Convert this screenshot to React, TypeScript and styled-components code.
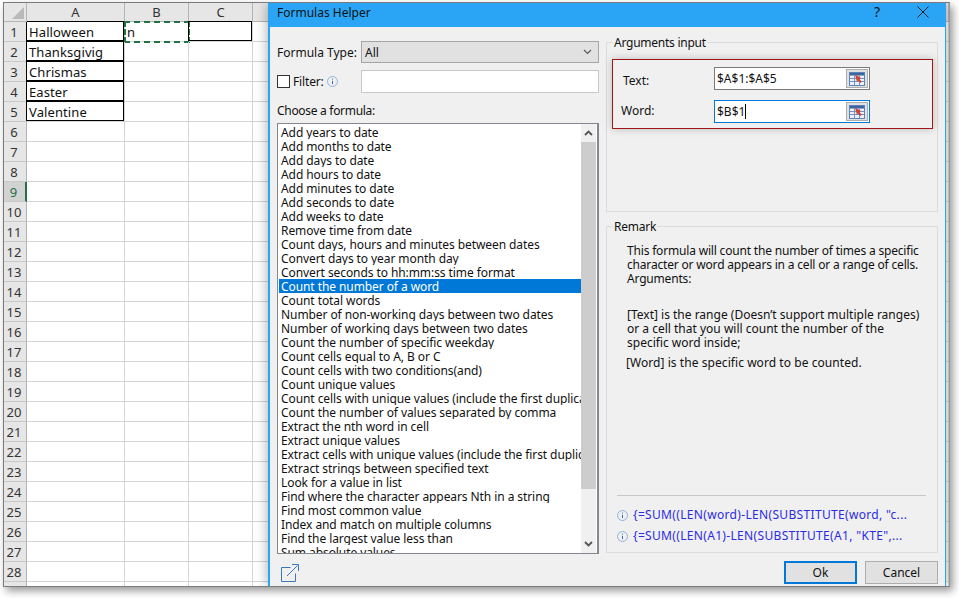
import React from "react";
import styled, { createGlobalStyle } from "styled-components";

const Global = createGlobalStyle`
  html, body { margin: 0; padding: 0; background: #fff; overflow: hidden; }
  * { box-sizing: border-box; }
`;
const FONT = `"Noto Sans", "DejaVu Sans", sans-serif`;

const Page = styled.div`
  width: 959px; height: 598px; padding: 2px 0 0 3px;
  font-family: ${FONT}; font-size: 12px; color: #111;
`;
const Window = styled.div`
  position: relative; width: 947px; height: 585px; background: #fff; overflow: hidden;
  border: 1px solid #7b7b7b; border-right-color: #9a9a9a;
  box-shadow: 3px 4px 8px rgba(0,0,0,.4);
`;
const Sheet = styled.div`
  display: grid; grid-template-columns: 23px 98px 64px 64px 1fr; grid-template-rows: 19px; grid-auto-rows: 20px;
  height: 100%; overflow: hidden;
`;
const Corner = styled.div`
  position: relative; background: #e6e6e6; border-right: 1px solid #b4b4b4; border-bottom: 1px solid #b4b4b4;
  &::after { content: ""; position: absolute; right: 2px; bottom: 2px; border-style: solid; border-width: 0 0 12px 12px; border-color: transparent transparent #b9b9b9 transparent; }
`;
const ColHead = styled.div`
  background: #e6e6e6; border-right: 1px solid #b4b4b4; border-bottom: 1px solid #b4b4b4;
  font-size: 13px; color: #333; text-align: center; line-height: 18px;
`;
const RowHead = styled.div<{ $active?: boolean }>`
  background: ${p => p.$active ? "#d2d2d2" : "#e6e6e6"};
  color: ${p => p.$active ? "#217346" : "#333"};
  border-right: ${p => p.$active ? "2px solid #217346" : "1px solid #b4b4b4"};
  border-bottom: 1px solid #c8c8c8;
  font-size: 13px; text-align: center; line-height: 21px; padding-right: 2px;
`;
const Cell = styled.div<{ $boxed?: boolean; $ants?: boolean }>`
  border-right: 1px solid #d4d4d4; border-bottom: 1px solid #d4d4d4;
  font-size: 13px; letter-spacing: .1px; line-height: 20px; padding-left: 2px; color: #111; white-space: nowrap;
  ${p => p.$boxed ? "box-shadow: -1px -1px 0 #000, inset -1px -1px 0 #000;" : ""}
  ${p => p.$ants ? "outline: 2px dashed #217346; outline-offset: -1px;" : ""}
`;

const Dialog = styled.div`
  position: absolute; left: 264px; top: 0; width: 678px; bottom: 0; background: #f0f0f0;
  border-left: 2px solid #2aa5f5; border-right: 1px solid #2aa5f5; display: flex; flex-direction: column;
  box-shadow: 0 0 12px rgba(0,0,0,.35);
`;
const TitleBar = styled.div`
  flex: none; height: 24px; background: #2aa5f5; display: flex; align-items: center; padding: 0 0 6px 9px; margin: 0 -1px 0 -2px;
  font-size: 12px; color: #111;
`;
const TitleText = styled.span`flex: 1;`;
const TitleButton = styled.span<{ $w: number }>`
  width: ${p => p.$w}px; display: flex; justify-content: center; font-size: 14px; line-height: 16px;
`;
const Body = styled.div`
  flex: 1; display: flex; gap: 7px; padding: 14px 0 0 7px; min-height: 0;
`;
const LeftPane = styled.div`width: 322px; display: flex; flex-direction: column;`;
const RightPane = styled.div`width: 332px; display: flex; flex-direction: column; padding-top: 1px;`;
const FormRow = styled.div`
  display: grid; grid-template-columns: 84px 238px; align-items: center; margin-bottom: 7px;
`;
const Select = styled.div`
  height: 22px; background: #e1e1e1; border: 1px solid #a6a6a6; display: flex; align-items: center;
  justify-content: space-between; padding: 0 6px 0 3px;
`;
const FilterLabel = styled.label`display: flex; align-items: center; gap: 3px; letter-spacing: -.15px;`;
const Check = styled.span`width: 13px; height: 13px; border: 1px solid #333; background: #fff; display: block;`;
const FilterInput = styled.div`height: 23px; background: #fff; border: 1px solid #c8c8c8;`;
const ChooseLabel = styled.div`line-height: 16px; margin: 3px 0 4px; letter-spacing: -.3px;`;
const List = styled.div`
  height: 431px; background: #fff; border: 1px solid #828790; border-right-width: 2px; padding: 1px 0 0 1px; display: flex; overflow: hidden;
`;
const Items = styled.div`flex: 1; min-width: 0; overflow: hidden;`;
const Item = styled.div<{ $selected?: boolean }>`
  height: 14px; line-height: 16px; padding-left: 2px; white-space: nowrap; overflow: hidden; letter-spacing: -.08px;
  background: ${p => p.$selected ? "#0078d7" : "transparent"};
  color: ${p => p.$selected ? "#fff" : "#111"};
`;
const ScrollTrack = styled.div`width: 15px; margin: -1px 1px 0 0; background: #f0f0f0; display: flex; flex-direction: column; justify-content: space-between; align-items: stretch;`;
const ScrollBtn = styled.div`height: 18px; display: flex; align-items: center; justify-content: center; flex: none;`;
const Thumb = styled.div`height: 347px; background: #cdcdcd; flex: none;`;
const Spacer = styled.div`flex: 1;`;
const ShareButton = styled.div`margin: 10px 0 0 4px; height: 18px;`;

const Group = styled.div<{ $h: number }>`
  height: ${p => p.$h}px; border: 1px solid #dcdcdc; padding: 0 5px; display: flex; flex-direction: column;
`;
const Legend = styled.div`
  flex: none; width: fit-content; margin: -8px 0 0 1px; padding: 0 1px; background: #f0f0f0; line-height: 15px; letter-spacing: -.25px;
`;
const RedBox = styled.div`
  margin-top: 9px; height: 70px; border: 1px solid #a31515; margin-left: 0; width: 321px; padding: 7px 0 0 0;
  box-shadow: 0 0 8px rgba(0,0,0,.22); display: flex; flex-direction: column; gap: 10px;
`;
const ArgRow = styled.div`display: grid; grid-template-columns: 101px 156px; align-items: center;`;
const ArgLabel = styled.span<{ $x: number; $down?: number; $up?: number }>`
  padding-left: ${p => p.$x}px; margin-top: ${p => p.$down || 0}px; margin-bottom: ${p => p.$up || 0}px;
`;
const ArgInput = styled.div<{ $focus?: boolean }>`
  height: 23px; background: #fff; border: 1px solid ${p => p.$focus ? "#0078d7" : "#7a7a7a"};
  display: flex; align-items: center; justify-content: space-between; padding: 0 1px 0 2px;
`;
const Caret = styled.span`display: inline-block; width: 1px; height: 15px; background: #000; vertical-align: -3px;`;
const RangeBtn = styled.span`
  width: 22px; height: 19px; background: #e1e1e1; border: 1px solid #adadad; display: flex; align-items: center; justify-content: center;
`;
const RemarkGroup = styled(Group)`margin-top: 14px;`;
const RemarkText = styled.div`padding: 9px 0 0 15px; line-height: 14px; flex: 1;`;
const Para = styled.p<{ $mt: number; $ml?: number; $ls: number }>`
  margin: ${p => p.$mt}px 0 0 ${p => p.$ml || 0}px; white-space: nowrap; letter-spacing: ${p => p.$ls}px;
`;
const Divider = styled.div`height: 1px; background: #c8c8c8; margin: 0 6px 0 5px;`;
const Links = styled.div`padding: 12px 0 9px 5px; display: flex; flex-direction: column; gap: 7px;`;
const LinkRow = styled.div`display: flex; align-items: center; gap: 5px; color: #2b2be6; line-height: 14px; white-space: nowrap; letter-spacing: .33px;`;
const Footer = styled.div`display: flex; justify-content: flex-end; gap: 8px; margin-top: 8px; padding-right: 0;`;
const Button = styled.div<{ $primary?: boolean }>`
  width: 73px; height: 23px; background: #e1e1e1; text-align: center;
  border: ${p => p.$primary ? "2px solid #0078d7" : "1px solid #adadad"};
  line-height: ${p => p.$primary ? 19 : 21}px;
`;

const Info = () => (
  <svg width="11" height="11" viewBox="0 0 11 11" fill="none">
    <circle cx="5.5" cy="5.5" r="5" stroke="#8fb2dd" />
    <path d="M5.5 2.6v1M5.5 4.8v3.4" stroke="#3f6fae" />
  </svg>
);
const Chevron = ({ up, weight = 1.8 }: { up?: boolean; weight?: number }) => (
  <svg width="9" height="6" viewBox="0 0 9 6" fill="none">
    <path d={up ? "M1 5l3.5-3.5L8 5" : "M1 1l3.5 3.5L8 1"} stroke="#555" strokeWidth={weight} />
  </svg>
);
const RangeIcon = () => (
  <svg width="16" height="14" viewBox="0 0 16 14">
    <rect x="0.5" y="0.5" width="15" height="13" fill="#eaf1fa" stroke="#5c83b8" />
    <rect x="1" y="1" width="14" height="2.5" fill="#3c64a0" />
    <path d="M1 6.5h14M1 9.5h14M5.5 3.5v10M10.5 3.5v10" stroke="#6f93c4" />
    <path d="M6 2.5l6 3.5-1.6 1.2 2.4 2.2-1.4 1.5-2.4-2.3L8 10z" fill="#d8402a" />
  </svg>
);
const ShareIcon = () => (
  <svg width="18" height="18" viewBox="0 0 18 18" fill="none" stroke="#3a78bd">
    <path d="M9.5 3.5h-9v14h14v-8" />
    <path d="M6 12L16.5 1.5M11 .5h6.5V7" />
  </svg>
);
const CloseIcon = () => (
  <svg width="12" height="12" viewBox="0 0 12 12" fill="none" stroke="#222"><path d="M.5.5l11 11M11.5.5l-11 11" /></svg>
);

const names = ["Halloween", "Thanksgivig", "Chrismas", "Easter", "Valentine"];
const rows = Array.from({ length: 29 }, (_, i) => i + 1);
const formulas = [
  "Add years to date", "Add months to date", "Add days to date", "Add hours to date", "Add minutes to date",
  "Add seconds to date", "Add weeks to date", "Remove time from date", "Count days, hours and minutes between dates",
  "Convert days to year month day", "Convert seconds to hh:mm:ss time format", "Count the number of a word",
  "Count total words", "Number of non-working days between two dates", "Number of working days between two dates",
  "Count the number of specific weekday", "Count cells equal to A, B or C", "Count cells with two conditions(and)",
  "Count unique values", "Count cells with unique values (include the first duplica",
  "Count the number of values separated by comma", "Extract the nth word in cell", "Extract unique values",
  "Extract cells with unique values (include the first duplic", "Extract strings between specified text",
  "Look for a value in list", "Find where the character appears Nth in a string", "Find most common value",
  "Index and match on multiple columns", "Find the largest value less than", "Sum absolute values",
];

export default function App() {
  return (
    <Page>
      <Global />
      <Window>
        <Sheet>
          <Corner />
          <ColHead>A</ColHead><ColHead>B</ColHead><ColHead>C</ColHead><ColHead />
          {rows.map(r => (
            <React.Fragment key={r}>
              <RowHead $active={r === 9}>{r}</RowHead>
              <Cell $boxed={r <= 5}>{names[r - 1]}</Cell>
              <Cell $ants={r === 1}>{r === 1 ? "n" : ""}</Cell>
              <Cell $boxed={r === 1} />
              <Cell />
            </React.Fragment>
          ))}
        </Sheet>
        <Dialog>
          <TitleBar>
            <TitleText>Formulas Helper</TitleText>
            <TitleButton $w={46}>?</TitleButton>
            <TitleButton $w={46}><CloseIcon /></TitleButton>
          </TitleBar>
          <Body>
            <LeftPane>
              <FormRow>
                <span>Formula Type:</span>
                <Select><span>All</span><Chevron weight={1.1} /></Select>
              </FormRow>
              <FormRow>
                <FilterLabel><Check />Filter:<Info /></FilterLabel>
                <FilterInput />
              </FormRow>
              <ChooseLabel>Choose a formula:</ChooseLabel>
              <List>
                <Items>
                  {formulas.map((f, i) => <Item key={f} $selected={i === 11}>{f}</Item>)}
                </Items>
                <ScrollTrack>
                  <ScrollBtn><Chevron up /></ScrollBtn>
                  <Thumb />
                  <Spacer />
                  <ScrollBtn><Chevron /></ScrollBtn>
                </ScrollTrack>
              </List>
              <ShareButton><ShareIcon /></ShareButton>
            </LeftPane>
            <RightPane>
              <Group $h={170}>
                <Legend>Arguments input</Legend>
                <RedBox>
                  <ArgRow>
                    <ArgLabel $x={10} $down={4}>Text:</ArgLabel>
                    <ArgInput><span>$A$1:$A$5</span><RangeBtn><RangeIcon /></RangeBtn></ArgInput>
                  </ArgRow>
                  <ArgRow>
                    <ArgLabel $x={8} $up={2}>Word:</ArgLabel>
                    <ArgInput $focus><span>$B$1<Caret /></span><RangeBtn><RangeIcon /></RangeBtn></ArgInput>
                  </ArgRow>
                </RedBox>
              </Group>
              <RemarkGroup $h={327}>
                <Legend>Remark</Legend>
                <RemarkText>
                  <Para $mt={1} $ls={-0.18}>This formula will count the number of times a specific<br />character or word appears in a cell or a range of cells.<br />Arguments:</Para>
                  <Para $mt={22} $ls={0}>[Text] is the range (Doesn’t support multiple ranges)<br />or a cell that you will count the number of the<br />specific word inside;</Para>
                  <Para $mt={6} $ml={-1} $ls={0.06}>[Word] is the specific word to be counted.</Para>
                </RemarkText>
                <Divider />
                <Links>
                  <LinkRow><Info />{'{=SUM((LEN(word)-LEN(SUBSTITUTE(word, "c...'}</LinkRow>
                  <LinkRow><Info />{'{=SUM((LEN(A1)-LEN(SUBSTITUTE(A1, "KTE",...'}</LinkRow>
                </Links>
              </RemarkGroup>
              <Footer>
                <Button $primary>Ok</Button>
                <Button>Cancel</Button>
              </Footer>
            </RightPane>
          </Body>
        </Dialog>
      </Window>
    </Page>
  );
}
